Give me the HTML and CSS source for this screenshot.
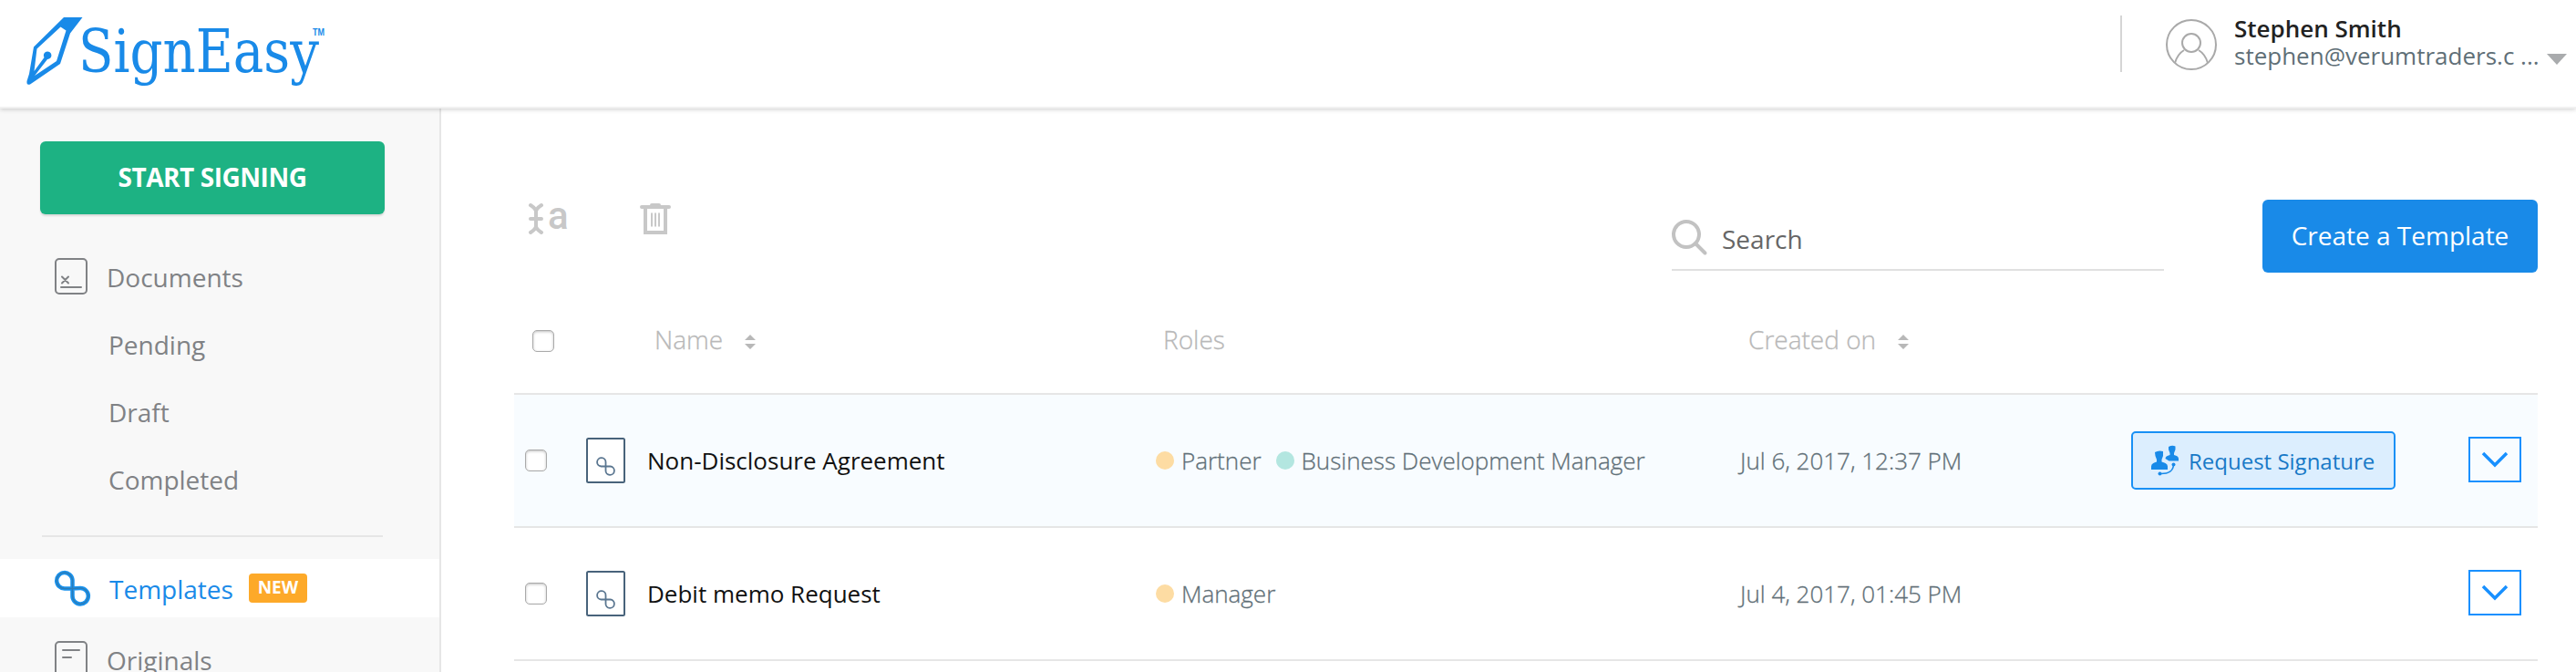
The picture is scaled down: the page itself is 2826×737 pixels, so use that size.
FILE: index.html
```
<!DOCTYPE html>
<html lang="en">
<head>
    <meta charset="UTF-8">
    <meta name="viewport" content="width=device-width, initial-scale=1.0">
    <title>SignEasy - Templates</title>
    <link rel="stylesheet" href="styles.css">
</head>
<body>
    <header class="header">
        <a class="logo">
            <svg width="340" height="90" viewBox="0 0 340 90">
                <path class="logo-fill" fill-rule="evenodd" d="M50 9h20.500L57 26.500 46 60 16 80.500 13 82.500Q9 84 9.500 79L12 71 17 41.500zM46.500 19.500 20.500 43.500 17.500 68 28.500 53A4.300 4.300 0 1 1 32 55L18 73 42 57 52.500 23.500z"/>
                <text class="logo-text" x="66" y="69" textLength="264" lengthAdjust="spacingAndGlyphs">SignEasy</text>
                <text class="logo-tm" x="323" y="29" textLength="13" lengthAdjust="spacingAndGlyphs">TM</text>
            </svg>
        </a>
        <div class="user">
            <svg class="avatar" width="56" height="56" viewBox="0 0 56 56">
                <circle cx="28" cy="28" r="27"/>
                <circle cx="28" cy="26" r="10"/>
                <path d="M10 48c2-7 5-11 10-14M46 48c-2-7-5-11-10-14"/>
            </svg>
            <div class="user-info">
                <span class="user-name">Stephen Smith</span>
                <span class="user-email">stephen@verumtraders.c ...</span>
            </div>
            <span class="caret"></span>
        </div>
    </header>

    <div class="page">
        <nav class="sidebar">
            <button class="start-button">START SIGNING</button>
            <a class="nav-item documents">
                <svg width="36" height="40" viewBox="0 0 36 40">
                    <rect x="1" y="1" width="34" height="38" rx="4"/>
                    <path d="M8 20.500l7 7M15 20.500l-7 7M7 32h22"/>
                </svg>
                <span>Documents</span>
            </a>
            <a class="nav-item sub">Pending</a>
            <a class="nav-item sub">Draft</a>
            <a class="nav-item sub">Completed</a>
            <hr class="divider">
            <a class="nav-item active">
                <svg width="38" height="38" viewBox="0 0 38 38">
                    <path class="loop" d="M19 19.500H11A8.700 8.700 0 1 1 19.500 10V27A8.700 8.700 0 1 0 28 19z"/>
                    <path class="loop-inner" d="M19 19.500H11A8.700 8.700 0 1 1 19.500 10V27A8.700 8.700 0 1 0 28 19z"/>
                </svg>
                <span class="active-label">Templates</span>
                <span class="badge">NEW</span>
            </a>
            <a class="nav-item originals">
                <svg width="36" height="40" viewBox="0 0 36 40">
                    <rect x="1" y="1" width="34" height="38" rx="4"/>
                    <path d="M9 10h18M9 18h9"/>
                </svg>
                <span>Originals</span>
            </a>
        </nav>

        <main class="content">
            <div class="toolbar">
                <svg class="rename" width="46" height="34" viewBox="0 0 46 34">
                    <path d="M4 2q6 4 6 7v16q0 3-6 7M16 2q-6 4-6 7M16 32q-6-4-6-7M4 17h12"/>
                    <text x="23" y="28">a</text>
                </svg>
                <svg class="trash" width="34" height="34" viewBox="0 0 34 34">
                    <path d="M2 4h30M13 2h8" stroke-width="4" stroke-linecap="round"/>
                    <path d="M6 4v28h22V4" stroke-width="4"/>
                    <path d="M13 10.500v15M17 10.500v15M21 10.500v15" stroke-width="2"/>
                </svg>
                <div class="search">
                    <svg width="39" height="39" viewBox="0 0 39 39">
                        <circle cx="16" cy="16" r="14"/>
                        <path d="M26 26l10.500 10.500"/>
                    </svg>
                    <span>Search</span>
                </div>
                <button class="create-button">Create a Template</button>
            </div>

            <div class="table">
                <div class="table-head">
                    <span class="checkbox"></span>
                    <div class="head-name">Name <svg class="sort" width="12" height="16" viewBox="0 0 12 16"><path d="M0 6l6-6 6 6zM0 10h12l-6 6z"/></svg></div>
                    <div class="head-roles">Roles</div>
                    <div class="head-date">Created on <svg class="sort" width="12" height="16" viewBox="0 0 12 16"><path d="M0 6l6-6 6 6zM0 10h12l-6 6z"/></svg></div>
                </div>

                <div class="row selected">
                    <span class="checkbox"></span>
                    <svg class="file" width="43" height="50" viewBox="0 0 43 50">
                        <rect x="1" y="1" width="41" height="48" rx="1.500"/>
                        <path d="M22 31.500H16.500A4.700 4.700 0 1 1 21.500 27V36A4.700 4.700 0 1 0 26.500 31.500z"/>
                    </svg>
                    <div class="name">Non-Disclosure Agreement</div>
                    <div class="roles">
                        <span class="role"><i class="dot orange"></i>Partner</span>
                        <span class="role"><i class="dot teal"></i>Business Development Manager</span>
                    </div>
                    <div class="date">Jul 6, 2017, 12:37 PM</div>
                    <button class="request-button">
                        <svg width="31" height="33" viewBox="0 0 31 33">
                            <path class="people" d="M4 7q4-2.500 9-1v5l-1.500 4v2.500q6.500 1.500 6.500 5V26H0v-3.500q0-3.500 6-5V15L4.500 11zM19 1q4-2 7.500-.5V4L25 8v2q5 1 5 4v2.500H19.500L15.500 14q0-3 5-4V8L19 4z"/>
                            <path class="link" d="M24.500 20q0 11-15 10.500"/>
                            <circle class="people" cx="24.500" cy="20.500" r="2"/>
                            <circle class="people" cx="9.500" cy="30.500" r="2"/>
                        </svg>
                        <span>Request Signature</span>
                    </button>
                    <span class="dropdown"><svg width="30" height="18" viewBox="0 0 30 18"><path d="M2 2l13 13L28 2"/></svg></span>
                </div>

                <div class="row">
                    <span class="checkbox"></span>
                    <svg class="file" width="43" height="50" viewBox="0 0 43 50">
                        <rect x="1" y="1" width="41" height="48" rx="1.500"/>
                        <path d="M22 31.500H16.500A4.700 4.700 0 1 1 21.500 27V36A4.700 4.700 0 1 0 26.500 31.500z"/>
                    </svg>
                    <div class="name">Debit memo Request</div>
                    <div class="roles">
                        <span class="role"><i class="dot orange"></i>Manager</span>
                    </div>
                    <div class="date">Jul 4, 2017, 01:45 PM</div>
                    <span class="dropdown"><svg width="30" height="18" viewBox="0 0 30 18"><path d="M2 2l13 13L28 2"/></svg></span>
                </div>
            </div>
        </main>
    </div>
</body>
</html>
```
FILE: styles.css
```
* {
    box-sizing: border-box;
}

body {
    margin: 0;
    height: 737px;
    overflow: hidden;
    background: #fff;
    font-family: "Open Sans", sans-serif;
    font-size: 26px;
    color: #5f6f77;
}

button {
    padding: 0;
    border: none;
    font-family: inherit;
    cursor: pointer;
}

svg {
    flex: none;
    fill: none;
    overflow: visible;
}

/* header */
.header {
    position: relative;
    display: flex;
    justify-content: space-between;
    height: 119px;
    border-bottom: 2px solid #f1f1f1;
    box-shadow: 0 1px 5px rgba(0, 0, 0, 0.2);
    background: #fff;
}

.logo {
    margin: 10px 0 0 20px;
}

.logo-fill {
    fill: #198ae8;
}

.logo-text {
    font-family: "DejaVu Serif", serif;
    font-size: 65px;
    fill: #198ae8;
}

.logo-tm {
    font-family: "Liberation Sans", sans-serif;
    font-size: 10px;
    font-weight: bold;
    fill: #198ae8;
}

.user {
    display: flex;
    align-items: flex-start;
    height: 62px;
    margin-top: 17px;
    width: 500px;
    padding-left: 48px;
    border-left: 2px solid #d5d5d5;
}

.avatar {
    margin-top: 4px;
    stroke: #a9a9a9;
    stroke-width: 2;
}

.user-info {
    display: flex;
    flex-direction: column;
    width: 334px;
    margin: -1px 0 0 19px;
    line-height: 30px;
    white-space: nowrap;
}

.user-name {
    font-weight: 600;
    color: #222;
}

.caret {
    margin: 42px 0 0 9px;
    border: 11px solid transparent;
    border-top: 12px solid #a9abad;
    border-bottom: 0;
}

/* sidebar */
.page {
    display: flex;
}

.sidebar {
    display: flex;
    flex-direction: column;
    flex: none;
    width: 484px;
    height: 640px;
    padding-top: 36px;
    border-right: 2px solid #e6e6e6;
    background: #f8f8f8;
}

.start-button {
    width: 378px;
    height: 80px;
    margin: 0 0 31px 44px;
    padding-bottom: 2px;
    border-radius: 6px;
    box-shadow: 0 2px 2px rgba(0, 0, 0, 0.12);
    background: #1db283;
    font-size: 28px;
    font-weight: 700;
    letter-spacing: -0.45px;
    color: #fff;
}

.nav-item {
    display: flex;
    flex: none;
    align-items: center;
    height: 74px;
    padding-left: 60px;
    font-size: 28px;
    color: #808285;
}

.nav-item svg {
    stroke: #808285;
    stroke-width: 2;
    stroke-linecap: round;
}

.nav-item span {
    margin-left: 21px;
    padding-top: 2px;
}

.nav-item.sub {
    padding: 2px 0 0 119px;
}

.divider {
    flex: none;
    width: 374px;
    height: 2px;
    margin: 25px 0 24px 46px;
    border: none;
    background: #e6e6e6;
}

.nav-item.active {
    height: 64px;
    background: #fff;
    color: #198ae8;
}

.nav-item .loop {
    stroke: #1a93ee;
    stroke-width: 4.500;
}

.nav-item .loop-inner {
    stroke: #2b7cb8;
    stroke-width: 1.500;
}

.nav-item .active-label {
    margin-left: 22px;
}

.nav-item .badge {
    width: 64px;
    height: 32px;
    margin-left: 17px;
    padding: 0;
    border-radius: 4px;
    background: #fda929;
    font-size: 19px;
    font-weight: 700;
    line-height: 31px;
    text-align: center;
    color: #fff;
}

.originals {
    padding-top: 18px;
}

/* content */
.content {
    flex: 1;
    padding: 100px 42px 0 80px;
}

.toolbar {
    display: flex;
    height: 80px;
}

.rename {
    margin: 4px 0 0 14px;
    stroke: #c8c8c8;
    stroke-width: 4;
    stroke-linecap: round;
}

.rename text {
    font-family: "Roboto", sans-serif;
    font-size: 42px;
    font-weight: 500;
    fill: #c8c8c8;
    stroke: none;
}

.trash {
    margin: 4px 0 0 78px;
    stroke: #c8c8c8;
}

.search {
    display: flex;
    width: 540px;
    height: 78px;
    margin: 0 108px 0 auto;
    padding-top: 22px;
    border-bottom: 2px solid #e0e0e0;
    font-size: 28px;
    line-height: 42px;
    color: #666;
}

.search svg {
    margin-right: 16px;
    stroke: #c2c2c2;
    stroke-width: 4;
    stroke-linecap: round;
}

.create-button {
    width: 302px;
    height: 80px;
    padding-bottom: 2px;
    border-radius: 6px;
    background: #198ae8;
    font-size: 28px;
    font-weight: 500;
    color: #fff;
}

.table-head {
    display: grid;
    grid-template-columns: 154px 558px 642px 1fr;
    align-items: center;
    height: 134px;
    padding-top: 18px;
    border-bottom: 2px solid #e6e6e6;
    font-size: 28px;
    font-weight: 300;
    color: #b8b8b8;
    -webkit-text-stroke: 0.3px #b8b8b8;
}

.head-name,
.head-roles,
.head-date {
    padding-bottom: 4px;
}

.table-head .checkbox {
    margin-left: 20px;
}

.checkbox {
    width: 24px;
    height: 24px;
    border: 1px solid #aaa;
    border-radius: 5px;
    box-shadow: inset 0 1px 3px rgba(0, 0, 0, 0.25);
    background: #fff;
}

.sort {
    margin-left: 17px;
    fill: #b8b8b8;
}

.row {
    display: grid;
    grid-template-columns: 67px 68px 557px 641px 429px 370px 1fr;
    align-items: center;
    height: 146px;
    padding-left: 12px;
    border-bottom: 2px solid #e6e6e6;
}

.row.selected {
    background: #f8fcff;
}

.file rect {
    stroke: #48637b;
    stroke-width: 2;
    fill: #fff;
}

.file path {
    stroke: #5a7690;
    stroke-width: 1.800;
}

.name {
    margin-left: -1px;
    color: #111;
}

.roles {
    display: flex;
    gap: 16px;
}

.roles,
.date {
    font-weight: 300;
    -webkit-text-stroke: 0.3px #5f6f77;
}

.role {
    display: flex;
    align-items: center;
}

.dot {
    width: 20px;
    height: 20px;
    margin-right: 8px;
    border-radius: 50%;
}

.orange {
    background: #fddca3;
}

.teal {
    background: #b3e6e0;
}

.request-button {
    display: flex;
    align-items: center;
    width: 290px;
    height: 64px;
    padding-left: 20px;
    border: 2px solid #1890f5;
    border-radius: 5px;
    background: #dceefe;
    font-size: 24px;
    color: #1879c7;
    white-space: nowrap;
}

.request-button svg {
    margin-right: 10px;
}

.people {
    fill: #198ae8;
}

.link {
    stroke: #198ae8;
    stroke-width: 1.500;
}

.dropdown {
    display: flex;
    grid-column: 7;
    align-items: center;
    justify-content: center;
    width: 58px;
    height: 50px;
    margin-top: -2px;
    border: 2px solid #1890ff;
}

.dropdown svg {
    stroke: #1890ff;
    stroke-width: 3.500;
}
```
